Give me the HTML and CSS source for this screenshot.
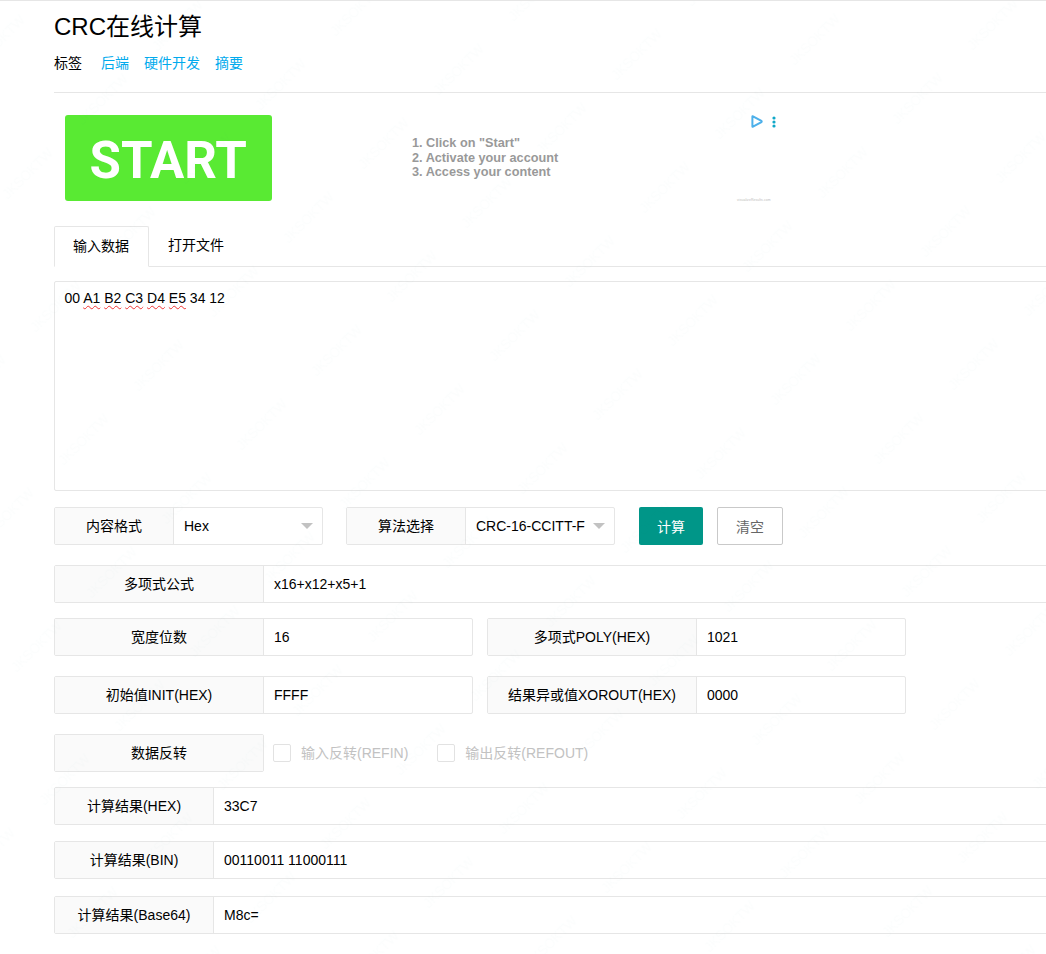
FILE: index.html
```html
<!DOCTYPE html>
<html lang="zh-CN">
<head>
<meta charset="utf-8">
<title>CRC在线计算</title>
<link rel="stylesheet" href="styles.css">
</head>
<body>
<main class="page">
  <h1 class="title">CRC在线计算</h1>
  <div class="tags">
    <span class="tag-label">标签</span>
    <a class="tag tag-first">后端</a>
    <a class="tag">硬件开发</a>
    <a class="tag">摘要</a>
  </div>
  <div class="ad">
    <div class="ad-start">START</div>
    <ol class="ad-steps">
      <li>1. Click on "Start"</li>
      <li>2. Activate your account</li>
      <li>3. Access your content</li>
    </ol>
    <div class="ad-icons">
      <svg class="ad-play" width="12" height="13" viewBox="0 0 12 13"><path d="M1.4 1.6 Q1.4 1 2 1.3 L10.4 5.9 Q11 6.5 10.4 7.1 L2 11.7 Q1.4 12 1.4 11.4 Z" fill="none" stroke="#4db0ea" stroke-width="2" stroke-linejoin="round"/></svg>
      <svg class="ad-dots" width="4" height="12" viewBox="0 0 4 12"><circle cx="2" cy="2" r="1.6" fill="#10a8c8"/><circle cx="2" cy="6" r="1.6" fill="#10a8c8"/><circle cx="2" cy="10" r="1.6" fill="#10a8c8"/></svg>
    </div>
    <div class="ad-foot">visualizeResults.com</div>
  </div>
  <div class="tabs">
    <div class="tab tab-active">输入数据</div>
    <div class="tab">打开文件</div>
  </div>
  <div class="textarea">00 <span class="typo">A1</span> <span class="typo">B2</span> <span class="typo">C3</span> <span class="typo">D4</span> <span class="typo">E5</span> 34 12</div>

  <div class="row row-controls">
    <div class="group group-select">
      <div class="label label-sm">内容格式</div>
      <div class="value select">Hex<i class="caret"></i></div>
    </div>
    <div class="group group-select group-algo">
      <div class="label label-sm">算法选择</div>
      <div class="value select">CRC-16-CCITT-F<i class="caret"></i></div>
    </div>
    <button class="btn btn-primary">计算</button>
    <button class="btn btn-plain">清空</button>
  </div>

  <div class="row gap-20">
    <div class="group group-full">
      <div class="label label-lg">多项式公式</div>
      <div class="value">x16+x12+x5+1</div>
    </div>
  </div>

  <div class="row gap-15 pair">
    <div class="group group-half">
      <div class="label label-lg">宽度位数</div>
      <div class="value">16</div>
    </div>
    <div class="group group-half">
      <div class="label label-lg">多项式POLY(HEX)</div>
      <div class="value">1021</div>
    </div>
  </div>

  <div class="row gap-20 pair">
    <div class="group group-half">
      <div class="label label-lg">初始值INIT(HEX)</div>
      <div class="value">FFFF</div>
    </div>
    <div class="group group-half">
      <div class="label label-lg">结果异或值XOROUT(HEX)</div>
      <div class="value">0000</div>
    </div>
  </div>

  <div class="row gap-20 checks">
    <div class="group">
      <div class="label label-lg label-only">数据反转</div>
    </div>
    <div class="check check-first"><i class="box"></i>输入反转(REFIN)</div>
    <div class="check"><i class="box"></i>输出反转(REFOUT)</div>
  </div>

  <div class="row gap-15">
    <div class="group group-full">
      <div class="label label-md">计算结果(HEX)</div>
      <div class="value">33C7</div>
    </div>
  </div>
  <div class="row gap-16">
    <div class="group group-full">
      <div class="label label-md">计算结果(BIN)</div>
      <div class="value">00110011 11000111</div>
    </div>
  </div>
  <div class="row gap-17">
    <div class="group group-full">
      <div class="label label-md">计算结果(Base64)</div>
      <div class="value">M8c=</div>
    </div>
  </div>
</main>
<svg class="watermark" width="1046" height="954" aria-hidden="true">
  <defs>
    <pattern id="wm" patternUnits="userSpaceOnUse" width="1" height="1" patternTransform="matrix(103 59 -75 74 501 270.5)">
      <g transform="matrix(.006143 -.004897 .006226 .00855 .5 .5)">
        <text class="watermark-text" transform="rotate(-45)" text-anchor="middle" y="5">JKSOKTW</text>
      </g>
    </pattern>
  </defs>
  <rect width="1046" height="954" fill="url(#wm)"/>
</svg>
</body>
</html>
```
FILE: styles.css
```css
* { box-sizing: border-box; }
html, body { margin: 0; padding: 0; height: 954px; overflow: hidden; background: #fff; }
body {
  border-top: 1px solid #e6e6e6;
  position: relative;
  font-family: "Liberation Sans", "Noto Sans CJK SC", sans-serif;
  font-size: 14px;
  color: #000;
}
.watermark { position: absolute; left: 0; top: -1px; pointer-events: none; }
.watermark-text { font: 14px "Liberation Sans", sans-serif; fill: #00727a; fill-opacity: .012; }
.page { width: 1100px; margin-left: 54px; padding-top: 1px; }
.title { margin: 0; font-size: 24px; font-weight: 400; line-height: 50px; height: 50px; }
.tags { display: flex; height: 41px; line-height: 23px; border-bottom: 1px solid #e6e6e6; }
.tag-label { width: 47px; }
.tag { color: #01AAED; margin-right: 15px; }

.ad { position: relative; height: 133px; display: flex; }
.ad-start {
  margin: 22px 0 0 10.5px; width: 207.5px; height: 86px;
  background: #59ea33; border-radius: 3px; color: #fff;
  font: 700 51px/91px Roboto, sans-serif; text-align: center;
}
.ad-steps { margin: 43px 0 0 140px; padding: 0; list-style: none; font: 700 12.7px/14.7px "Liberation Sans", sans-serif; color: #999; }
.ad-icons { position: absolute; left: 697px; top: 22px; display: flex; align-items: center; gap: 9px; }
.ad-foot { position: absolute; left: 683px; top: 105px; font: 3.4px/4px "Liberation Sans", sans-serif; color: #bbb; letter-spacing: .1px; }

.tabs { display: flex; height: 41px; border-bottom: 1px solid #e6e6e6; }
.tab { height: 41px; line-height: 39px; padding: 0 19px; }
.tab-active { border: 1px solid #e6e6e6; border-bottom: 1px solid #fff; border-radius: 2px 2px 0 0; padding: 0 18px; width: 95px; }

.textarea {
  margin-top: 14px; height: 210px; padding: 8px 9.5px;
  border: 1px solid #e6e6e6; border-radius: 2px; line-height: 17px;
}
.typo { text-decoration: underline wavy #e33; text-decoration-thickness: 1px; text-underline-offset: 2px; }

.row { display: flex; height: 38px; }
.row-controls { margin-top: 16px; }
.gap-15 { margin-top: 15px; }
.gap-16 { margin-top: 16px; }
.gap-17 { margin-top: 17px; }
.gap-20 { margin-top: 20px; }

.group { display: flex; height: 38px; border: 1px solid #e6e6e6; border-radius: 2px; }
.group-select { width: 269px; }
.group-algo { margin-left: 23px; }
.group-full { width: 1100px; }
.group-half { width: 419px; }
.pair .group-half + .group-half { margin-left: 14px; }

.label {
  flex: none; background: #fafafa; border-right: 1px solid #e6e6e6;
  text-align: center; line-height: 36px; white-space: nowrap;
}
.label-sm { width: 119px; }
.label-md { width: 159px; }
.label-lg { width: 209px; }
.label-only { border-right: 0; width: 208px; }
.value { flex: 1; line-height: 36px; padding-left: 10px; white-space: nowrap; position: relative; }
.caret {
  position: absolute; right: 9px; top: 15px; width: 0; height: 0;
  border: 6.5px solid transparent; border-top: 6.5px solid #c2c2c2; border-bottom: 0;
}

.btn { height: 38px; font: inherit; border-radius: 2px; cursor: pointer; padding: 0; }
.btn-primary { width: 64px; margin-left: 24px; background: #009688; color: #fff; border: 0; }
.btn-plain { width: 66px; margin-left: 14px; background: #fff; color: #666; border: 1px solid #c9c9c9; }

.checks { align-items: center; }
.check { display: flex; align-items: center; color: #c2c2c2; line-height: 38px; margin-left: 29px; }
.check-first { margin-left: 9px; }
.box { width: 18px; height: 18px; border: 1px solid #e2e2e2; border-radius: 2px; margin-right: 10px; background: #fff; }
```
